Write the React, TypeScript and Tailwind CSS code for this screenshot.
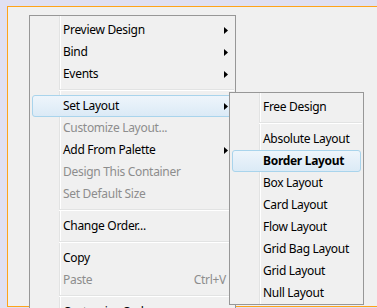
import React from "react";

type Entry =
  | "sep"
  | {
      label: string;
      sub?: boolean;
      disabled?: boolean;
      shortcut?: string;
      active?: boolean;
      bold?: boolean;
    };

const mainItems: Entry[] = [
  { label: "Preview Design", sub: true },
  { label: "Bind", sub: true },
  { label: "Events", sub: true },
  "sep",
  { label: "Set Layout", sub: true, active: true },
  { label: "Customize Layout...", disabled: true },
  { label: "Add From Palette", sub: true },
  { label: "Design This Container", disabled: true },
  { label: "Set Default Size", disabled: true },
  "sep",
  { label: "Change Order..." },
  "sep",
  { label: "Copy" },
  { label: "Paste", disabled: true, shortcut: "Ctrl+V" },
  "sep",
  { label: "Customize Code..." },
  { label: "Properties" },
];

const layoutItems: Entry[] = [
  { label: "Free Design" },
  "sep",
  { label: "Absolute Layout" },
  { label: "Border Layout", active: true, bold: true },
  { label: "Box Layout" },
  { label: "Card Layout" },
  { label: "Flow Layout" },
  { label: "Grid Bag Layout" },
  { label: "Grid Layout" },
  { label: "Null Layout" },
];

function Arrow() {
  return (
    <svg width="4" height="7" viewBox="0 0 4 7" className="block">
      <polygon points="0,0 4,3.5 0,7" fill="#000" />
    </svg>
  );
}

function Menu({ items, className }: { items: Entry[]; className: string }) {
  return (
    <div
      className={`${className} border border-[#979797] pt-[3px] pb-[3px] bg-[linear-gradient(to_right,#f0f0f0_29px,#e2e3e3_29px,#e2e3e3_30px,#ffffff_30px,#ffffff_31px,#f0f0f0_31px)] font-['Noto_Sans',sans-serif] text-[12px] tracking-[-0.3px]`}
    >
      {items.map((it, i) =>
        it === "sep" ? (
          <div key={i} className="h-[10px] pt-[4px] ml-[29px] mr-[1px]">
            <div className="border-t border-t-[#e2e3e3] border-b border-b-white" />
          </div>
        ) : (
          <div
            key={i}
            className={`mx-[2px] h-[22px] flex items-center border rounded-[3px] pl-[30px] pr-[4px] ${
              it.active
                ? "border-[#a9d4ec] bg-gradient-to-b from-[#eef5fb] to-[#dbeaf6]"
                : "border-transparent"
            } ${it.disabled ? "text-[#8d8d8d]" : "text-black"} ${
              it.bold ? "font-bold" : ""
            }`}
          >
            <span className="flex-1 whitespace-nowrap leading-none">{it.label}</span>
            {it.shortcut && (
              <span className="pr-[2px] whitespace-nowrap leading-none">{it.shortcut}</span>
            )}
            {it.sub && <Arrow />}
          </div>
        )
      )}
    </div>
  );
}

export default function App() {
  return (
    <div className="relative w-[377px] h-[308px] overflow-hidden bg-[#e0e0f2] pt-[6px] pl-[7px]">
      {/* designer form area */}
      <div className="w-[420px] h-[301px] border border-[#ffa31a] bg-[#f0f0f0]" />

      {/* context menu */}
      <Menu items={mainItems} className="absolute left-[29px] top-[15px] w-[207px]" />

      {/* Set Layout submenu */}
      <Menu items={layoutItems} className="absolute left-[229px] top-[92px] w-[135px] !pb-0" />
    </div>
  );
}
